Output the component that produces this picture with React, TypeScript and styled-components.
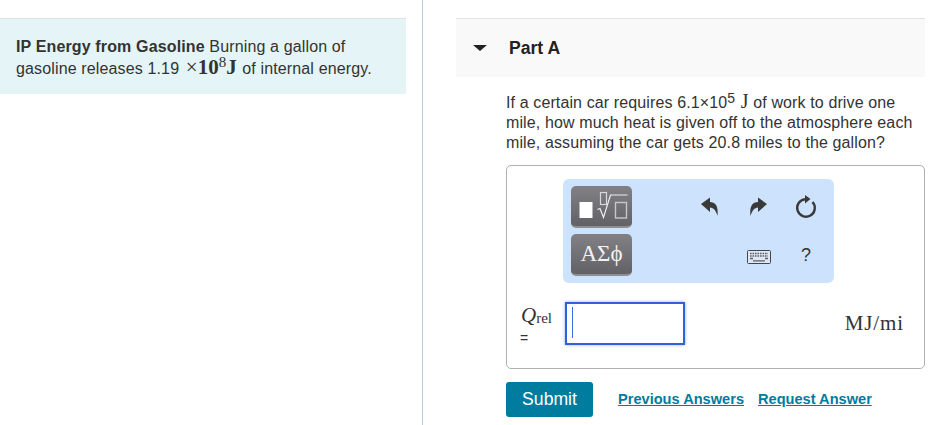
import React from 'react';
import styled, { createGlobalStyle } from 'styled-components';

const GlobalStyle = createGlobalStyle`
  html, body {
    margin: 0;
    background: #fff;
    overflow: hidden;
  }
  body {
    font-family: "Liberation Sans", Arial, sans-serif;
    color: #333;
  }
`;

const App: React.FC = () => {
  return (
    <Page>
      <GlobalStyle />
      <LeftColumn>
        <Intro>
          <strong>IP Energy from Gasoline</strong> Burning a gallon of gasoline releases 1.19{' '}
          <IntroMath>
            <Times>×</Times>10<IntroSup>8</IntroSup>J
          </IntroMath>{' '}
          of internal energy.
        </Intro>
      </LeftColumn>
      <RightColumn>
        <PartHeader>
          <Caret />
          <PartTitle>Part A</PartTitle>
        </PartHeader>
        <PartBody>
          <Question>
            If a certain car requires 6.1×10<QuestionSup>5</QuestionSup> <Unit>J</Unit> of work to
            drive one mile, how much heat is given off to the atmosphere each mile, assuming the
            car gets 20.8 miles to the gallon?
          </Question>
          <AnswerBox>
            <Toolbar>
              <ToolButtons>
                <ToolButton aria-label="templates">
                  <TemplateIcon />
                </ToolButton>
                <ToolButton aria-label="symbols">
                  <Greek>ΑΣϕ</Greek>
                </ToolButton>
              </ToolButtons>
              <ToolIcons>
                <IconCell><UndoIcon /></IconCell>
                <IconCell><RedoIcon /></IconCell>
                <IconCell><ResetIcon /></IconCell>
                <IconCell />
                <IconCell><KeyboardIcon /></IconCell>
                <IconCell><Help>?</Help></IconCell>
              </ToolIcons>
            </Toolbar>
            <AnswerRow>
              <AnswerLabel>
                <Symbol>
                  <i>Q</i>
                  <Subscript>rel</Subscript>
                </Symbol>
                <Equals>=</Equals>
              </AnswerLabel>
              <AnswerInput>
                <Cursor />
              </AnswerInput>
              <Units>MJ/mi</Units>
            </AnswerRow>
          </AnswerBox>
          <Actions>
            <SubmitButton>Submit</SubmitButton>
            <ActionLink>Previous Answers</ActionLink>
            <ActionLink>Request Answer</ActionLink>
          </Actions>
        </PartBody>
      </RightColumn>
    </Page>
  );
};

export default App;

const TemplateIcon = () => (
  <svg width="54" height="32" viewBox="0 0 54 32">
    <rect x="4.500" y="12" width="13" height="16" fill="#fff" />
    <rect x="25.500" y="2.500" width="6" height="12" fill="none" stroke="#d8d8d8" strokeWidth="1.200" />
    <path d="M22.500 19.500l2.500-1l3.500 9l7-22.500h17" fill="none" stroke="#eee" strokeWidth="1.200" />
    <rect x="40.500" y="12.500" width="11" height="15.500" fill="none" stroke="#c8c8c8" strokeWidth="1.400" />
  </svg>
);

const UndoIcon = () => (
  <svg width="20" height="20" viewBox="0 0 20 20">
    <path
      d="M1 7L10 .5V5C15 5 18.800 8.500 17.500 19C16 13.500 13.500 10.800 10 10.500V15z"
      fill="#3a3a3a"
    />
  </svg>
);

const RedoIcon = () => (
  <svg width="20" height="20" viewBox="0 0 20 20">
    <path
      d="M19 7L10 .5V5C5 5 1.200 8.500 2.500 19C4 13.500 6.500 10.800 10 10.500V15z"
      fill="#3a3a3a"
    />
  </svg>
);

const ResetIcon = () => (
  <svg width="22" height="24" viewBox="0 0 22 24">
    <path
      d="M10 4.200A8.800 8.800 0 1 0 17.500 7"
      fill="none"
      stroke="#3a3a3a"
      strokeWidth="2.400"
    />
    <path d="M10 0l5.500 4L10 8.500z" fill="#3a3a3a" />
  </svg>
);

const KeyboardIcon = () => (
  <KeyboardSvg width="24" height="14" viewBox="0 0 24 14">
    <rect x="0.500" y="0.500" width="23" height="13" rx="1" fill="#dfe8f2" stroke="#3f4650" />
    <path
      d="M3 3.500h18M3 6h18"
      stroke="#58606a"
      strokeWidth="1.400"
      strokeDasharray="1.600 .9"
    />
    <path d="M3 8.500h3M18 8.500h3M6 10.800h12" stroke="#58606a" strokeWidth="1.300" />
  </KeyboardSvg>
);

const KeyboardSvg = styled.svg`
  margin: 4px 0 0 1px;
`;

const Page = styled.div`
  display: flex;
  width: 939px;
  height: 425px;
  overflow: hidden;
`;

const LeftColumn = styled.div`
  box-sizing: border-box;
  flex: none;
  width: 423px;
  height: 425px;
  padding-top: 18px;
  border-right: 1px solid #bccddd;
`;

const Intro = styled.p`
  box-sizing: border-box;
  width: 406px;
  height: 76px;
  margin: 0;
  padding: 17px 16px 0;
  background: #e5f5f7;
  border-top: 1px solid #dfe2e4;
  font-size: 16px;
  letter-spacing: 0.14px;
  line-height: 22px;
`;

const IntroMath = styled.span`
  margin: 0 1px 0 2px;
  font-family: "Liberation Serif", "Times New Roman", serif;
  font-size: 21px;
  font-weight: 700;
  letter-spacing: 0;
  line-height: 0;
`;

const Times = styled.span`
  font-weight: 400;
`;

const IntroSup = styled.sup`
  position: relative;
  top: 1px;
  font-size: 15px;
  font-weight: 400;
  line-height: 0;
  vertical-align: super;
`;

const RightColumn = styled.div`
  flex: none;
  width: 469px;
  margin-left: 33px;
  padding-top: 18px;
`;

const PartHeader = styled.div`
  box-sizing: border-box;
  display: flex;
  align-items: center;
  height: 59px;
  padding-left: 17px;
  background: #f9f9f9;
  border-top: 1px solid #e3e3e3;
`;

const Caret = styled.span`
  width: 0;
  height: 0;
  margin-right: 22px;
  border-top: 6px solid #222;
  border-left: 7px solid transparent;
  border-right: 7px solid transparent;
`;

const PartTitle = styled.h2`
  margin: 0;
  color: #222;
  font-size: 17.6px;
  font-weight: 700;
`;

const PartBody = styled.div`
  padding: 16px 0 0 50px;
`;

const Question = styled.p`
  margin: 0;
  width: 410px;
  font-size: 16px;
  letter-spacing: 0.12px;
  line-height: 20px;
`;

const QuestionSup = styled.sup`
  font-size: 14px;
  line-height: 0;
  vertical-align: 5px;
`;

const Unit = styled.span`
  margin-left: 1px;
  font-family: "Liberation Serif", "Times New Roman", serif;
  font-size: 20px;
  line-height: 0;
`;

const AnswerBox = styled.div`
  box-sizing: border-box;
  height: 204px;
  margin-top: 12px;
  padding: 13px 20px 0 13px;
  border: 1px solid #b0b0b0;
  border-radius: 5px;
`;

const Toolbar = styled.div`
  box-sizing: border-box;
  display: flex;
  justify-content: space-between;
  width: 271px;
  height: 104px;
  margin-left: 43px;
  padding: 7px 8px;
  background: #cde3fd;
  border-radius: 6px;
`;

const ToolButtons = styled.div`
  display: flex;
  flex-direction: column;
  gap: 6px;
`;

const ToolButton = styled.button`
  display: flex;
  align-items: center;
  justify-content: center;
  width: 61px;
  height: 42px;
  padding: 0;
  border: 0;
  border-bottom: 2px solid #8f8f93;
  border-radius: 5px;
  background: linear-gradient(#828286, #626266);
  color: #fff;
`;

const Greek = styled.span`
  font-family: "Liberation Serif", "Times New Roman", serif;
  font-size: 23px;
  color: #f2f2f2;
`;

const ToolIcons = styled.div`
  display: grid;
  grid-template-columns: repeat(3, 48px);
  grid-template-rows: 42px 42px;
  row-gap: 6px;
  margin-right: -4px;
`;

const IconCell = styled.div`
  display: flex;
  align-items: center;
  justify-content: center;
`;

const Help = styled.span`
  color: #333;
  font-size: 18px;
`;

const AnswerRow = styled.div`
  display: flex;
  align-items: center;
  height: 46px;
  margin-top: 17px;
  color: #333;
  font-family: "Liberation Serif", "Times New Roman", serif;
`;

const AnswerLabel = styled.div`
  display: flex;
  flex-direction: column;
  width: 46px;
  margin-top: 2px;
`;

const Symbol = styled.span`
  padding-left: 1px;
  font-size: 21px;
  line-height: 24px;
  white-space: nowrap;
`;

const Subscript = styled.span`
  font-size: 15px;
  vertical-align: -1px;
`;

const Equals = styled.span`
  font-family: "Liberation Sans", Arial, sans-serif;
  font-size: 14px;
  line-height: 16px;
`;

const AnswerInput = styled.div`
  box-sizing: border-box;
  display: flex;
  align-items: center;
  width: 118px;
  height: 41px;
  padding-left: 5px;
  background: #fff;
  border: 1px solid #2f62d6;
  box-shadow: 0 0 0 1px #2f62d6, 0 0 3px 1px #8ba8ea;
`;

const Cursor = styled.span`
  width: 1px;
  height: 31px;
  margin-top: -2px;
  background: #3a6ee0;
`;

const Units = styled.span`
  margin-left: auto;
  font-size: 21px;
  letter-spacing: 0.9px;
`;

const Actions = styled.div`
  display: flex;
  align-items: center;
  margin-top: 13px;
`;

const SubmitButton = styled.button`
  width: 87px;
  height: 35px;
  margin-right: 25px;
  padding: 0;
  border: 0;
  border-radius: 3px;
  background: #007c9e;
  color: #fff;
  font-family: "Liberation Sans", Arial, sans-serif;
  font-size: 17.6px;
`;

const ActionLink = styled.a`
  margin: 0 14px 2px 0;
  color: #007c9e;
  font-size: 14.6px;
  font-weight: 700;
  text-decoration: underline;
`;
